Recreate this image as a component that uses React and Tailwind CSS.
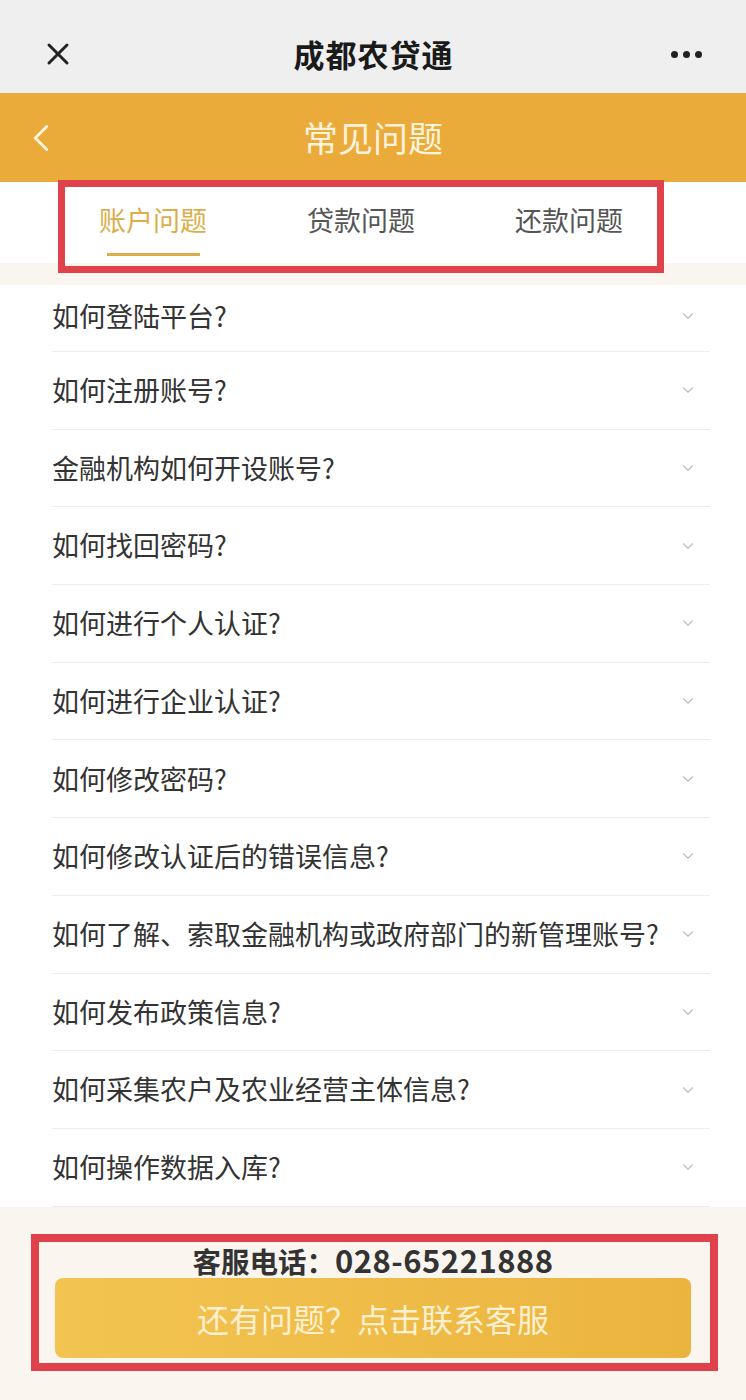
import { ChevronLeft, ChevronDown, X } from 'lucide-react';

const questions = [
  '如何登陆平台?',
  '如何注册账号?',
  '金融机构如何开设账号?',
  '如何找回密码?',
  '如何进行个人认证?',
  '如何进行企业认证?',
  '如何修改密码?',
  '如何修改认证后的错误信息?',
  '如何了解、索取金融机构或政府部门的新管理账号?',
  '如何发布政策信息?',
  '如何采集农户及农业经营主体信息?',
  '如何操作数据入库?',
];

const font = { fontFamily: '"Noto Sans CJK SC", "Noto Sans", sans-serif' };

export default function App() {
  return (
    <div className="relative w-[746px] h-[1400px] bg-[#faf5ef] overflow-hidden" style={font}>
      {/* wechat top bar */}
      <div className="h-[93px] bg-[#efefef] flex items-center justify-between pl-[40px] pr-[40px] pt-[16px] border-b border-[#f6f1ea]">
        <X className="w-[36px] h-[36px] text-[#222]" strokeWidth={2} />
        <h1 className="text-[31px] font-bold text-[#1a1a1a] tracking-[1px]">成都农贷通</h1>
        <div className="flex gap-[5px] pr-[4px]">
          <span className="w-[7px] h-[7px] rounded-full bg-[#222]" />
          <span className="w-[7px] h-[7px] rounded-full bg-[#222]" />
          <span className="w-[7px] h-[7px] rounded-full bg-[#222]" />
        </div>
      </div>

      {/* orange header */}
      <div className="h-[89px] bg-[#eaab3b] flex items-center relative">
        <ChevronLeft className="absolute left-[18px] w-[46px] h-[46px] text-[#fdf3dc]" strokeWidth={1.5} />
        <h2 className="w-full text-center text-[35px] text-[#fdf3dc]">常见问题</h2>
      </div>

      {/* tabs */}
      <div className="h-[81px] bg-white flex pl-[49px] pr-[73px]">
        <div className="flex-1 flex flex-col items-center justify-center relative">
          <span className="text-[27px] text-[#dcae4a] mt-[-4px]">账户问题</span>
          <span className="absolute bottom-[7px] w-[93px] h-[3px] bg-[#dcae4a]" />
        </div>
        <div className="flex-1 flex items-center justify-center">
          <span className="text-[27px] text-[#555] mt-[-4px]">贷款问题</span>
        </div>
        <div className="flex-1 flex items-center justify-center">
          <span className="text-[27px] text-[#555] mt-[-4px]">还款问题</span>
        </div>
      </div>

      <div className="h-[22px]" />

      {/* question list */}
      <div className="bg-white pl-[52px] pr-[36px]">
        {questions.map((q, i) => (
          <div
            key={q}
            className={`flex items-center justify-between border-b border-[#ececec] ${i === 0 ? 'h-[67px] pb-[4px]' : 'h-[77.7px]'}`}
          >
            <span className="text-[27px] text-[#333]">{q}</span>
            <ChevronDown className="w-[18px] h-[18px] text-[#bdbdbd] mr-[13px]" strokeWidth={1.5} />
          </div>
        ))}
      </div>

      {/* bottom */}
      <div className="px-[55px] pt-[36px] flex flex-col items-center">
        <p className="text-[28.5px] font-bold text-[#333] leading-[34px]">
          客服电话：<span className="text-[31px] tracking-[0.5px]">028-65221888</span>
        </p>
        <button className="mt-[0px] w-full h-[80px] rounded-[8px] bg-gradient-to-r from-[#f3c451] to-[#ebb43e] text-[32px] text-[#fdf0d0]">
          还有问题？点击联系客服
        </button>
      </div>

      {/* red annotation boxes */}
      <div className="absolute left-[58px] top-[180px] w-[606px] h-[93px] border-[7px] border-[#e0424c]" />
      <div className="absolute left-[31px] top-[1234px] w-[687px] h-[137px] border-[8px] border-[#e0424c]" />
    </div>
  );
}
